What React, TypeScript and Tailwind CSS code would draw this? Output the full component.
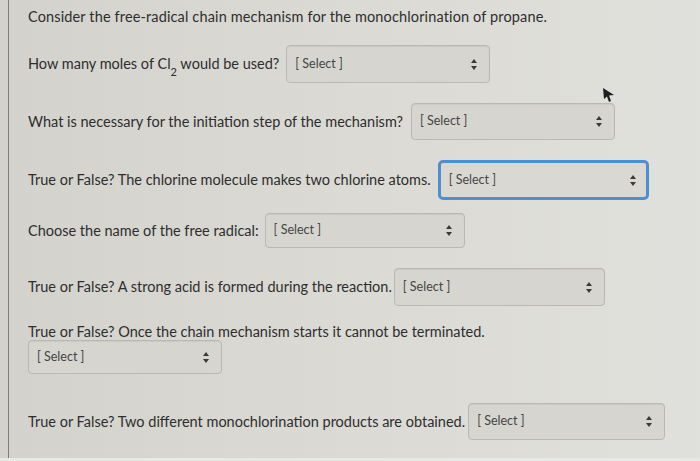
import React from "react";

function Arrows() {
  return (
    <svg width="6" height="11" viewBox="0 0 6 11" className="shrink-0">
      <polygon points="3,0 6,4 0,4" fill="#3a3a3a" />
      <polygon points="0,7 6,7 3,11" fill="#3a3a3a" />
    </svg>
  );
}

function Select({ w, h, focused }: { w: number; h: number; focused?: boolean }) {
  return (
    <div
      style={{ width: w, height: h }}
      className={
        focused
          ? "flex items-center justify-between rounded-[5px] border-[3px] border-[#4d8fd0] bg-[#d9d8d3] pl-[8px] pr-[10px] shrink-0"
          : "flex items-center justify-between rounded-[4px] border border-[#b9b8b2] bg-[#d6d5d0] pl-[8px] pr-[12px] shrink-0 shadow-[inset_0_1px_1px_rgba(0,0,0,0.06)]"
      }
    >
      <span className="text-[12.5px] text-[#454545]">[ Select ]</span>
      <Arrows />
    </div>
  );
}

export default function App() {
  return (
    <div
      className="relative w-[700px] h-[461px] overflow-hidden bg-gradient-to-r from-[#d3d2cd] via-[#dbdad5] to-[#e0e0dc] text-[#2e2e2e]"
      style={{ fontFamily: "Lato, 'Open Sans', sans-serif" }}
    >
      <div className="ml-[8px] h-[458px] border-l border-[#7d7c78] pl-[19px] flex flex-col text-[14.5px]">
        <div className="mt-[7px] h-[20px] flex items-center tracking-[0.14px]">
          Consider the free-radical chain mechanism for the monochlorination of propane.
        </div>
        <div className="mt-[18px] flex items-center gap-[7px]">
          <span>
            How many moles of Cl<sub className="text-[11px] align-[-4px]">2</sub> would be used?
          </span>
          <Select w={204} h={38} />
        </div>
        <div className="mt-[20px] flex items-center gap-[8px]">
          <span>What is necessary for the initiation step of the mechanism?</span>
          <Select w={204} h={37} />
        </div>
        <div className="mt-[20px] flex items-center gap-[7px]">
          <span>True or False? The chlorine molecule makes two chlorine atoms.</span>
          <Select w={211} h={40} focused />
        </div>
        <div className="mt-[13px] flex items-center gap-[6px]">
          <span>Choose the name of the free radical:</span>
          <Select w={200} h={35} />
        </div>
        <div className="mt-[20px] flex items-center gap-[2px]">
          <span>True or False? A strong acid is formed during the reaction.</span>
          <Select w={211} h={38} />
        </div>
        <div className="mt-[17px] h-[17px] flex items-center">
          True or False? Once the chain mechanism starts it cannot be terminated.
        </div>
        <div className="mt-0">
          <Select w={194} h={34} />
        </div>
        <div className="mt-[29px] flex items-center gap-[3px]">
          <span>True or False? Two different monochlorination products are obtained.</span>
          <Select w={197} h={37} />
        </div>
      </div>
      <div className="h-[3px] bg-[#e8e8e4]" />
      <svg className="absolute left-[603px] top-[88px]" width="12" height="14" viewBox="0 0 12 14">
        <polygon points="0,0 11,7 6,7.5 8,13 6,14 4,8.5 1,11" fill="#1e1e1e" />
      </svg>
    </div>
  );
}
